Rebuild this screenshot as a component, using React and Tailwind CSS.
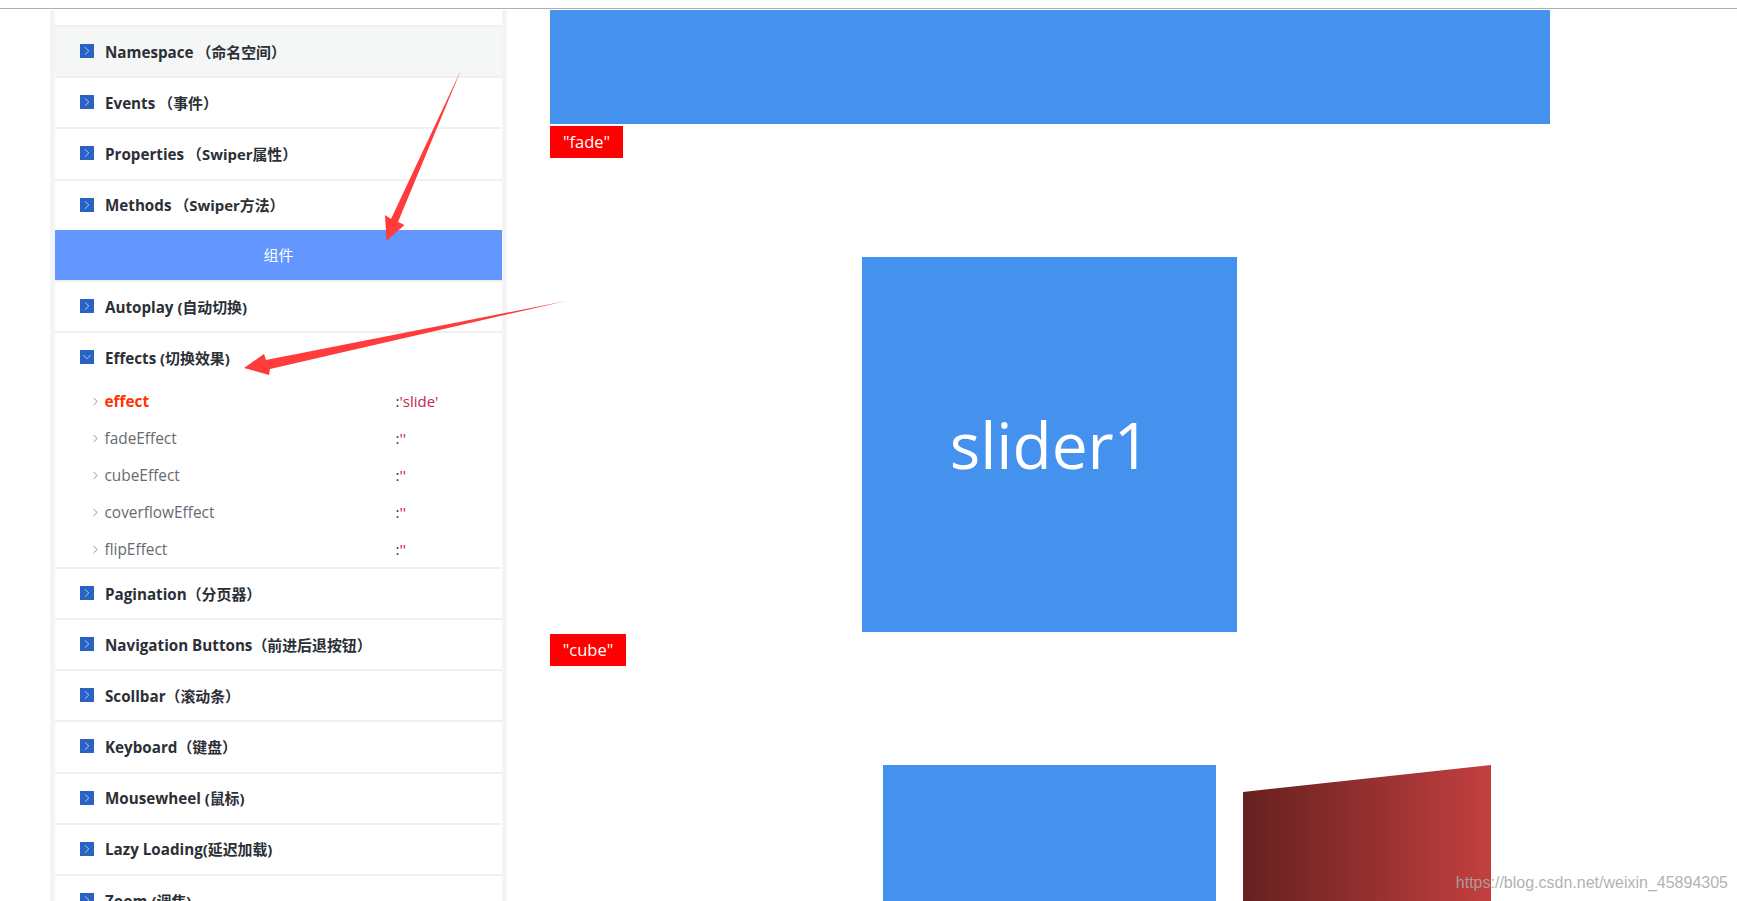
import { ChevronRight, ChevronDown } from 'lucide-react'

const beforeGroup = [
    { name: 'Namespace', sub: '（命名空间）', active: true, wide: true },
    { name: 'Events', sub: '（事件）', wide: true },
    { name: 'Properties', sub: '（Swiper属性）', wide: true },
    { name: 'Methods', sub: '（Swiper方法）', wide: true },
]

const afterGroup = [
    { name: 'Pagination', sub: '（分页器）' },
    { name: 'Navigation Buttons', sub: '（前进后退按钮）' },
    { name: 'Scollbar', sub: '（滚动条）' },
    { name: 'Keyboard', sub: '（键盘）' },
    { name: 'Mousewheel', sub: ' (鼠标)' },
    { name: 'Lazy Loading', sub: '(延迟加载)' },
    { name: 'Zoom', sub: ' (调焦)' },
]

const effects = [
    { name: 'effect', value: "'slide'", current: true },
    { name: 'fadeEffect', value: "''" },
    { name: 'cubeEffect', value: "''" },
    { name: 'coverflowEffect', value: "''" },
    { name: 'flipEffect', value: "''" },
]

function MenuRow({ name, sub, active, open, wide }) {
    return (
        <div className={`h-[51.2px] shrink-0 flex items-center pl-[25px] border-t-2 border-[#eef0f2] ${active ? 'bg-[#f5f6f6]' : 'bg-white'}`}>
            <span className="w-[14px] h-[14px] bg-[#2a62c4] flex items-center justify-center -mt-[1px]">
                {open
                    ? <ChevronDown className="w-[14px] h-[14px] text-[#b9cdf0]" strokeWidth={1.6} />
                    : <ChevronRight className="w-[14px] h-[14px] text-[#b9cdf0]" strokeWidth={1.6} />}
            </span>
            <span className="ml-[11px] pt-[1px] text-[15.2px] font-bold text-[#2b2f36] whitespace-pre">{name}<span className={`text-[14.9px] ${wide ? 'ml-[3px]' : ''}`}>{sub}</span></span>
        </div>
    )
}

function Label({ children, width }) {
    return <div className={`h-[32px] bg-[#ff0000] text-white text-[16.5px] flex items-center justify-center ${width}`}>{children}</div>
}

export default function App() {
    return (
        <div className="relative h-[901px] overflow-hidden bg-white font-['Open_Sans','Noto_Sans_CJK_SC',sans-serif]">
            <div className="h-[9px] border-b border-[#b0b0b0]" />

            <div className="flex h-[892px] pt-[1px]">
                {/* menu */}
                <div className="ml-[50px] w-[457px] shrink-0 border-x-[5px] border-[#f3f4f7] flex flex-col overflow-hidden">
                    <div className="h-[15px] shrink-0" />
                    {beforeGroup.map((r) => <MenuRow key={r.name} {...r} />)}
                    <div className="h-[50.2px] shrink-0 bg-[#6396fe] text-white text-[15px] flex items-center justify-center">组件</div>
                    <MenuRow name="Autoplay" sub=" (自动切换)" />
                    <MenuRow name="Effects" sub=" (切换效果)" open />
                    <div className="shrink-0 h-[187.5px] bg-white -mt-[3px] pt-[4px]">
                        {effects.map((e) => (
                            <div key={e.name} className="h-[37px] flex items-center pl-[34px]">
                                <ChevronRight className="w-[13px] h-[13px] text-[#777]" strokeWidth={1.5} />
                                <span className={`ml-[2.5px] w-[291px] text-[15.4px] ${e.current ? 'font-bold text-[#ff3300]' : 'text-[#666b70]'}`}>{e.name}</span>
                                <span className="-mt-[1px] text-[15px] text-[#333]">:<span className={e.current ? 'text-[#c7254e]' : 'text-[#d6006e]'}>{e.value}</span></span>
                            </div>
                        ))}
                    </div>
                    {afterGroup.map((r) => <MenuRow key={r.name} {...r} />)}
                </div>

                {/* slides */}
                <div className="ml-[43px] w-[1000px] flex flex-col">
                    <div className="h-[114px] shrink-0 bg-[#4591ee]" />
                    <div className="mt-[2px]"><Label width="w-[73px]">"fade"</Label></div>
                    <div className="mt-[99px] ml-[312px] pl-[1px] w-[375px] h-[375px] shrink-0 bg-[#4591ee] flex items-center justify-center text-white text-[64px]">slider1</div>
                    <div className="mt-[2px]"><Label width="w-[76px]">"cube"</Label></div>
                    <div className="mt-[99px] flex flex-1">
                        <div className="ml-[333px] w-[333px] bg-[#4591ee]" />
                        <div className="ml-[27px] w-[248px] bg-linear-to-r from-[#66201f] to-[#c44040] [clip-path:polygon(0_27px,100%_0,100%_100%,0_100%)]" />
                    </div>
                </div>
            </div>

            {/* annotation arrows */}
            <svg className="absolute left-0 top-0 pointer-events-none" width="1737" height="901">
                <polygon points="461,70 398,222 404.5,225 386.5,240.7 385,215 391,219" fill="#ff3b3b" />
                <polygon points="566,301 270,369 269,375 244,368 264,354 266,360" fill="#ff3b3b" />
            </svg>

            <div className="absolute right-[9px] top-[871px] text-[16px] text-[#a8a8a8]/90 font-['Liberation_Sans',sans-serif]">https://blog.csdn.net/weixin_45894305</div>
        </div>
    )
}
